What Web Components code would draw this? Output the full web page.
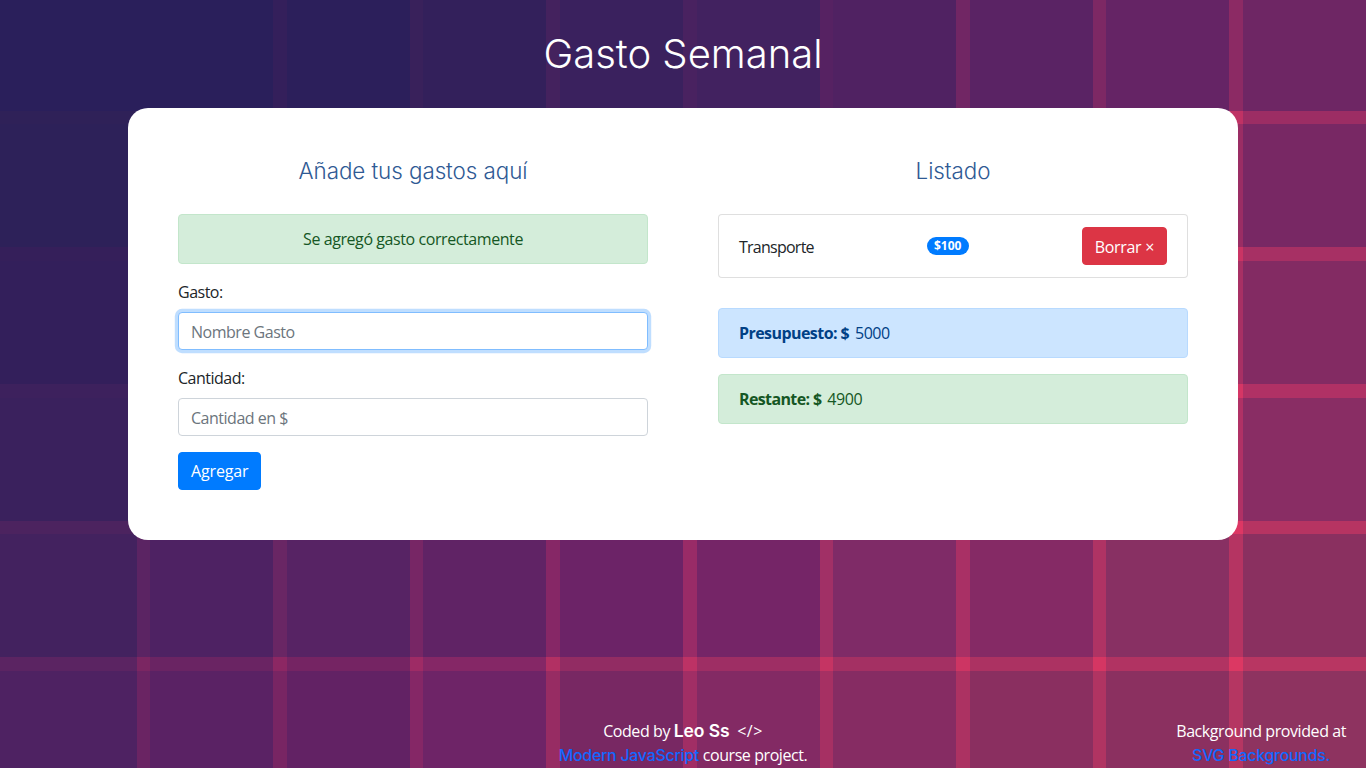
<!DOCTYPE html>
<html lang="es">
<head>
<meta charset="utf-8">
<title>Gasto Semanal</title>
<style>
    html,body{margin:0;padding:0;height:100%;overflow:hidden}
    body{font-family:"Open Sans","Liberation Sans",sans-serif;font-size:16px;line-height:24px;color:#212529}
</style>
</head>
<body>
<gasto-page>
    <gasto-header slot="header">Gasto Semanal</gasto-header>
    <gasto-card slot="main">
        <gasto-form slot="left"></gasto-form>
        <gasto-listado slot="right"></gasto-listado>
    </gasto-card>
    <gasto-footer slot="footer"></gasto-footer>
</gasto-page>

<script>
// colores de cada celda del fondo, fila por fila
const CELDAS = [
    '2a1f5b 2a1f5b 2c1f5b 33205b 3a215e 422260 502262 5a2364 652465 6e2664',
    '2d2159 32205b 3b215d 46225f 502262 5b2364 652465 6e2567 752767 782864',
    '331f5b 3a205c 44225f 4e2261 582364 642465 6e2567 782866 7e2a65 832b63',
    '3a215d 43225f 4c2362 562364 622366 6c2467 762867 7e2a66 852b65 892d64',
    '43225f 4e2263 572364 602365 6c2367 752567 7f2b67 852a65 883063 8a3060',
    '4e2262 5a2264 622264 6e2467 782863 832a64 862c63 8a2f60 8b3060 8e3360'
].map(fila => fila.split(' '))

const FRANJA_V = {
    0:[0,0,.04,.03,.05,.04,.04,.145,.16,.22],
    4:[0,.08,.11,.15,.19,.27,.28,.31,.34,.38],
    5:[0,.1,.14,.17,.24,.25,.28,.3,.33,.36]
}
const FRANJA_H = {
    1:[.01,.28],2:[.01,.3],3:[.02,.34],4:[.05,.39],
    5:[.08,.1,.12,.17,.2,.23,.26,.3,.34,.38]
}

class GastoFondo extends HTMLElement{
    constructor(){
        super()
        this.attachShadow({mode:'open'})
    }

    alfaV(fila,col){
        if(FRANJA_V[fila]) return FRANJA_V[fila][col]
        return FRANJA_V[0][col] + (FRANJA_V[4][col]-FRANJA_V[0][col])*fila/4
    }

    alfaH(fila,col){
        if(fila === 0) return 0
        const t = FRANJA_H[fila]
        return t.length > 2 ? t[col] : t[0] + (t[1]-t[0])*col/9
    }

    getRects(){
        const paso = 136.6, ancho = 13.66, y0 = 110.7
        let out = ''
        CELDAS.forEach((fila,j) => {
            const top = j === 0 ? 0 : y0 + paso*(j-1)
            const alto = j === 0 ? y0 : paso
            fila.forEach((color,i) => {
                const x = paso*i
                const v = this.alfaV(j,i), h = this.alfaH(j,i)
                out += `<rect x="${x}" y="${top}" width="${paso}" height="${alto}" fill="#${color}"/>`
                if(v) out += `<rect x="${x}" y="${top}" width="${ancho}" height="${alto}" fill="#fc3c66" fill-opacity="${v}"/>`
                if(h) out += `<rect x="${x}" y="${top}" width="${paso}" height="${ancho}" fill="#fc3c66" fill-opacity="${h}"/>`
                if(v && h) out += `<rect x="${x}" y="${top}" width="${ancho}" height="${ancho}" fill="#fc3c66" fill-opacity="${2*v*h}"/>`
            })
        })
        return out
    }

    connectedCallback(){
        this.shadowRoot.innerHTML = `
        <style>
        :host{position:absolute;inset:0;display:block}
        svg{display:block}
        </style>
        <svg width="1366" height="768" viewBox="0 0 1366 768" shape-rendering="crispEdges">${this.getRects()}</svg>
        `
    }
}

class GastoPage extends HTMLElement{
    constructor(){
        super()
        this.attachShadow({mode:'open'})
    }

    connectedCallback(){
        this.shadowRoot.innerHTML = `
        <style>
        :host{
            display:block;
            position:relative;
            height:100vh;
            overflow:hidden;
            background:#5a2364;
        }
        .content{
            position:relative;
            display:flex;
            flex-direction:column;
            height:100%;
        }
        .spacer{flex:1}
        </style>
        <gasto-fondo></gasto-fondo>
        <div class="content">
            <slot name="header"></slot>
            <slot name="main"></slot>
            <div class="spacer"></div>
            <slot name="footer"></slot>
        </div>
        `
    }
}

class GastoHeader extends HTMLElement{
    constructor(){
        super()
        this.attachShadow({mode:'open'})
    }

    connectedCallback(){
        this.shadowRoot.innerHTML = `
        <style>
        :host{display:block;height:108px}
        h1{
            margin:0;
            padding-top:30px;
            text-align:center;
            font:300 40px/48px Inter,Lato,sans-serif;
            color:#fff;
        }
        </style>
        <h1><slot></slot></h1>
        `
    }
}

class GastoCard extends HTMLElement{
    constructor(){
        super()
        this.attachShadow({mode:'open'})
    }

    connectedCallback(){
        this.shadowRoot.innerHTML = `
        <style>
        :host{
            display:grid;
            grid-template-columns:470px 470px;
            column-gap:70px;
            width:1110px;
            height:432px;
            box-sizing:border-box;
            margin:0 auto;
            padding:50px;
            background:#fff;
            border-radius:20px;
        }
        </style>
        <slot name="left"></slot>
        <slot name="right"></slot>
        `
    }
}

class GastoTitulo extends HTMLElement{
    constructor(){
        super()
        this.attachShadow({mode:'open'})
    }

    connectedCallback(){
        this.shadowRoot.innerHTML = `
        <style>
        :host{display:block;height:56px}
        h2{
            margin:0;
            text-align:center;
            font:300 22.4px/26px Inter,Lato,sans-serif;
            letter-spacing:-.06px;
            color:#2f5a94;
        }
        </style>
        <h2><slot></slot></h2>
        `
    }
}

class GastoAlert extends HTMLElement{
    constructor(){
        super()
        this.attachShadow({mode:'open'})
    }

    connectedCallback(){
        const info = this.getAttribute('type') === 'info'
        this.shadowRoot.innerHTML = `
        <style>
        :host{
            display:block;
            box-sizing:border-box;
            height:50px;
            padding:12px 20px;
            margin-bottom:16px;
            border:1px solid ${info ? '#b8daff' : '#c3e6cb'};
            border-radius:4px;
            background:${info ? '#cce5ff' : '#d4edda'};
            color:${info ? '#004085' : '#155724'};
            line-height:24px;
            letter-spacing:-.42px;
        }
        :host([center]){text-align:center}
        </style>
        <slot></slot>
        `
    }
}

class GastoField extends HTMLElement{
    constructor(){
        super()
        this.attachShadow({mode:'open'})
    }

    connectedCallback(){
        const focused = this.hasAttribute('focused')
        this.shadowRoot.innerHTML = `
        <style>
        :host{display:block;margin-bottom:16px}
        label{display:block;margin-bottom:8px;line-height:24px;letter-spacing:-.5px}
        input{
            display:block;
            width:100%;
            height:38px;
            box-sizing:border-box;
            padding:7px 12px 5px;
            font:inherit;
            letter-spacing:-.48px;
            color:#495057;
            background:#fff;
            border:1px solid ${focused ? '#80bdff' : '#ced4da'};
            border-radius:4px;
            outline:0;
            ${focused ? 'box-shadow:0 0 0 3.2px rgba(0,123,255,.25);' : ''}
        }
        input::placeholder{color:#6c757d;opacity:1}
        </style>
        <label>${this.getAttribute('label')}</label>
        <input type="text" placeholder="${this.getAttribute('placeholder')}">
        `
    }
}

class GastoForm extends HTMLElement{
    constructor(){
        super()
        this.attachShadow({mode:'open'})
    }

    connectedCallback(){
        this.shadowRoot.innerHTML = `
        <style>
        :host{display:block}
        button{
            display:block;
            height:38px;
            padding:6px 12px;
            font:inherit;
            letter-spacing:-.15px;
            color:#fff;
            background:#007bff;
            border:1px solid #007bff;
            border-radius:4px;
        }
        </style>
        <gasto-titulo>Añade tus gastos aquí</gasto-titulo>
        <gasto-alert center>Se agregó gasto correctamente</gasto-alert>
        <gasto-field label="Gasto:" placeholder="Nombre Gasto" focused></gasto-field>
        <gasto-field label="Cantidad:" placeholder="Cantidad en $"></gasto-field>
        <button type="button">Agregar</button>
        `
    }
}

class GastoItem extends HTMLElement{
    constructor(){
        super()
        this.attachShadow({mode:'open'})
    }

    connectedCallback(){
        this.shadowRoot.innerHTML = `
        <style>
        :host{
            display:flex;
            justify-content:space-between;
            align-items:center;
            box-sizing:border-box;
            height:64px;
            padding:12px 20px;
            margin-bottom:30px;
            background:#fff;
            border:1px solid rgba(0,0,0,.125);
            border-radius:4px;
        }
        .nombre{padding-top:1px;letter-spacing:-.75px}
        .badge{
            display:inline-block;
            padding:3px 7.2px;
            font-size:12px;
            font-weight:700;
            line-height:12px;
            color:#fff;
            background:#007bff;
            border-radius:10rem;
        }
        button{
            height:38px;
            padding:7px 12px 5px;
            font:inherit;
            letter-spacing:-.3px;
            color:#fff;
            background:#dc3545;
            border:1px solid #dc3545;
            border-radius:4px;
        }
        </style>
        <span class="nombre"><slot></slot></span>
        <span class="badge">$${this.getAttribute('cantidad')}</span>
        <button type="button">Borrar &times;</button>
        `
    }
}

class GastoListado extends HTMLElement{
    constructor(){
        super()
        this.attachShadow({mode:'open'})
    }

    connectedCallback(){
        this.shadowRoot.innerHTML = `
        <style>
        :host{display:block}
        strong{letter-spacing:-.56px;margin-right:2px}
        </style>
        <gasto-titulo>Listado</gasto-titulo>
        <gasto-item cantidad="100">Transporte</gasto-item>
        <gasto-alert type="info"><strong>Presupuesto: $</strong> 5000</gasto-alert>
        <gasto-alert><strong style="letter-spacing:-.62px">Restante: $</strong> 4900</gasto-alert>
        `
    }
}

class GastoFooter extends HTMLElement{
    constructor(){
        super()
        this.attachShadow({mode:'open'})
    }

    connectedCallback(){
        this.shadowRoot.innerHTML = `
        <style>
        :host{
            display:grid;
            grid-template-columns:1fr auto 1fr;
            padding:0 20px 1px;
            color:#fff;
            line-height:24px;
            text-align:center;
            letter-spacing:-.42px;
        }
        .right{justify-self:end}
        b{font:600 17.5px/24px Inter,Lato,sans-serif;letter-spacing:-.1px}
        a{font:500 16px/24px Inter,Lato,sans-serif;letter-spacing:-.3px;color:#1267ff;text-decoration:none}
        code{font:inherit;letter-spacing:.5px;margin-left:4px}
        </style>
        <div></div>
        <div>
            <div>Coded by <b>Leo Ss</b> <code>&lt;/&gt;</code></div>
            <div><a href="#">Modern JavaScript</a> course project.</div>
        </div>
        <div class="right">
            <div>Background provided at</div>
            <div><a href="#">SVG Backgrounds.</a></div>
        </div>
        `
    }
}

customElements.define('gasto-fondo',GastoFondo)
customElements.define('gasto-page',GastoPage)
customElements.define('gasto-header',GastoHeader)
customElements.define('gasto-card',GastoCard)
customElements.define('gasto-titulo',GastoTitulo)
customElements.define('gasto-alert',GastoAlert)
customElements.define('gasto-field',GastoField)
customElements.define('gasto-form',GastoForm)
customElements.define('gasto-item',GastoItem)
customElements.define('gasto-listado',GastoListado)
customElements.define('gasto-footer',GastoFooter)
</script>
</body>
</html>
